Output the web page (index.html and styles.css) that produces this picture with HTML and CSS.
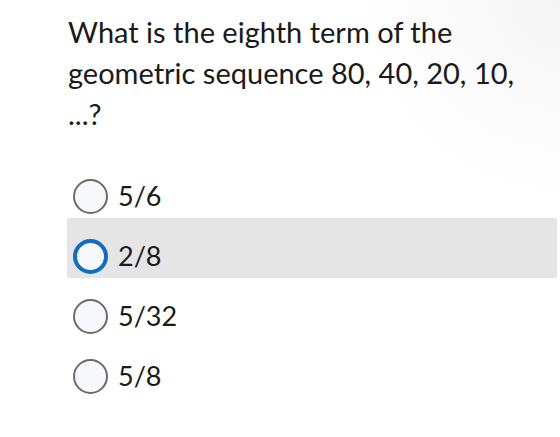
FILE: index.html
```html
<!DOCTYPE html>
<html lang="en">
<head>
<meta charset="utf-8">
<title>Question</title>
<link rel="stylesheet" href="styles.css">
</head>
<body>
<main class="quiz">
  <p class="question">What is the eighth term of the geometric sequence 80, 40, 20, 10, ...?</p>
  <ul class="options">
    <li class="option"><span class="radio"></span><span class="label">5/6</span></li>
    <li class="option option-active"><span class="radio radio-focus"></span><span class="label">2/8</span></li>
    <li class="option"><span class="radio"></span><span class="label">5/32</span></li>
    <li class="option"><span class="radio"></span><span class="label">5/8</span></li>
  </ul>
</main>
</body>
</html>
```

FILE: styles.css
```css
html, body {
  margin: 0;
  padding: 0;
  background: #ffffff;
}
body {
  width: 560px;
  height: 437px;
  overflow: hidden;
  font-family: Lato, "Open Sans", sans-serif;
  color: #1a1a1a;
  background: radial-gradient(circle at 560px 0, #f5f5f5 0, #ffffff 200px);
}
.quiz {
  padding: 11px 0 0 67px;
}
.question {
  margin: 0 0 0 1px;
  width: 475px;
  font-size: 29px;
  line-height: 41px;
}
.options {
  list-style: none;
  margin: 24px 0 0 0;
  padding: 0;
  width: 490px;
}
.option {
  display: flex;
  align-items: center;
  gap: 10px;
  height: 60px;
  box-sizing: border-box;
  padding: 16px 0 0 6px;
}
.option-active {
  background: #e5e5e5;
}
.radio {
  box-sizing: border-box;
  width: 35px;
  height: 35px;
  border-radius: 50%;
  border: 2px solid #6b6b6b;
  background: #f6f8fc;
  flex: none;
}
.radio-focus {
  border: 4px solid #116dbf;
}
.label {
  font-size: 27px;
  line-height: 30px;
}
```
